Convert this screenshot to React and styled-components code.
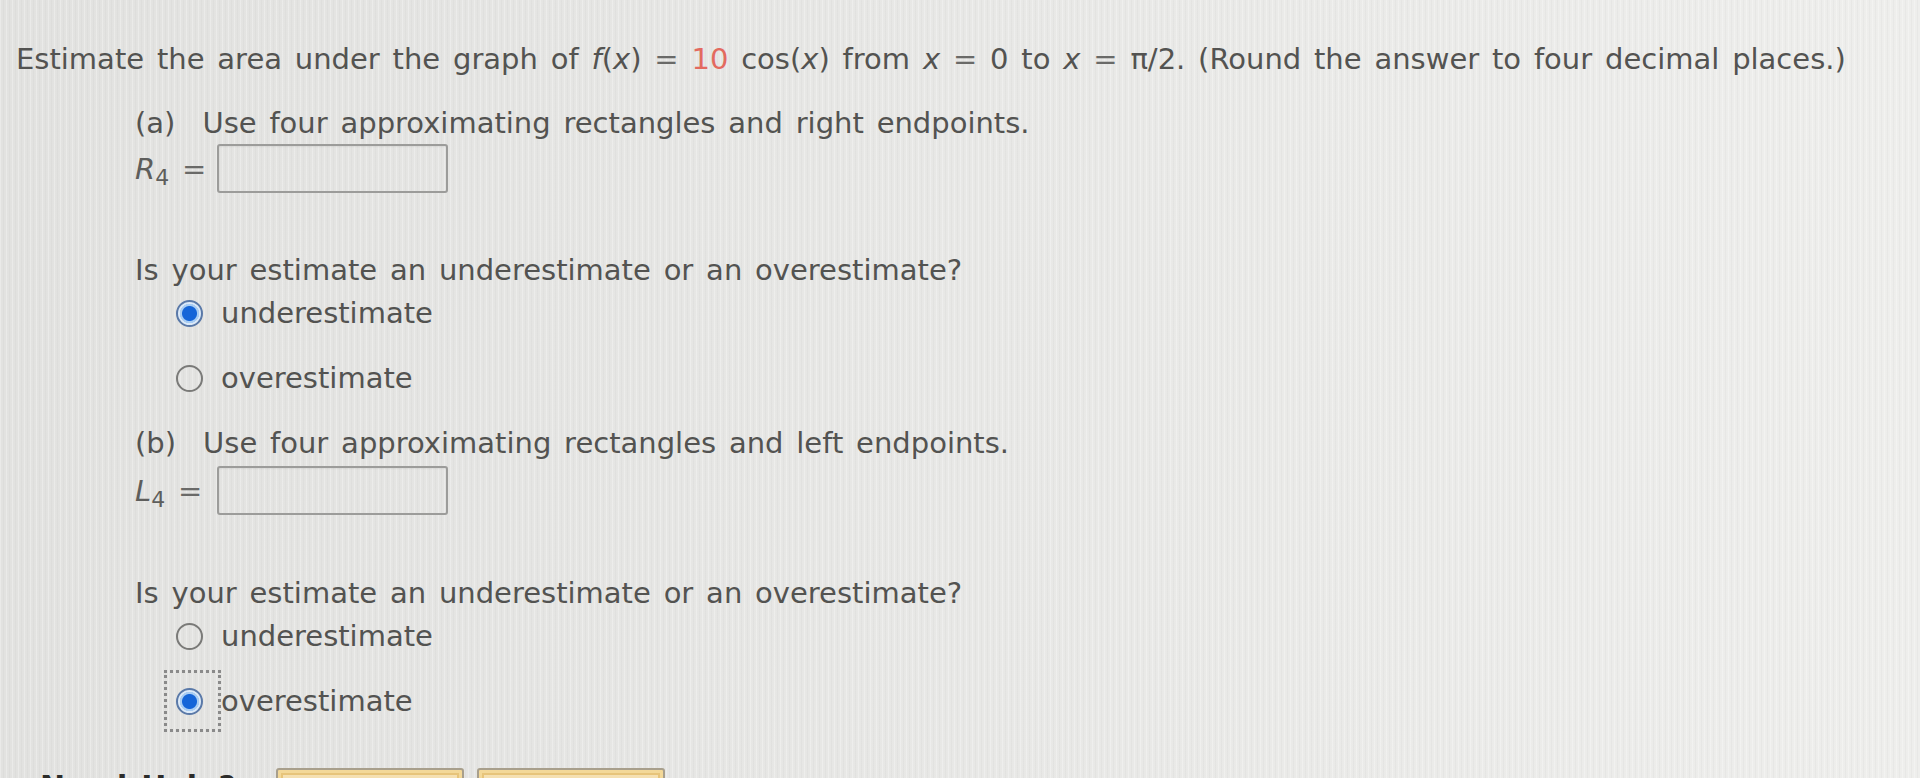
import React from "react";
import styled, { createGlobalStyle } from "styled-components";

const Global = createGlobalStyle`
  html, body {
    margin: 0;
    padding: 0;
    overflow: hidden;
    height: 100%;
  }
  body {
    font-family: "DejaVu Sans", Verdana, "Noto Sans", sans-serif;
  }
`;

const Page = styled.div`
  width: 1920px;
  height: 778px;
  box-sizing: border-box;
  padding: 42px 0 0 16px;
  color: #535351;
  font-size: 29px;
  line-height: 34px;
  word-spacing: 3.6px;
  background-color: #e7e7e5;
  background-image:
    repeating-linear-gradient(90deg, rgba(255, 255, 255, 0.28) 0 1px, rgba(0, 0, 0, 0) 1px 3px, rgba(160, 160, 160, 0.08) 3px 4px, rgba(0, 0, 0, 0) 4px 6px),
    linear-gradient(90deg, #e2e2e0 0%, #e6e6e4 35%, #ebebe9 75%, #eeeeec 100%);
  overflow: hidden;
`;

const Question = styled.p`
  margin: 0;
  white-space: nowrap;
`;

const Var = styled.i`
  font-style: italic;
`;

const Highlight = styled.span`
  color: #e36a5f;
`;

const Eq = styled.span`
  color: #6a6a68;
`;

const Part = styled.div`
  display: flex;
  flex-direction: column;
  padding-left: 119px;
`;

const PartTitle = styled.p`
  margin: ${(p) => p.$top}px 0 0 0;
  white-space: nowrap;
`;

const PartTag = styled.span`
  margin-right: 27px;
`;

const AnswerRow = styled.div`
  display: flex;
  align-items: center;
  margin-top: ${(p) => p.$top}px;
  height: 49px;
`;

const AnswerLabel = styled.span`
  width: 82px;
  color: #5e5e5c;
  white-space: nowrap;
`;

const Sub = styled.sub`
  font-size: 22px;
  font-style: normal;
  vertical-align: -6px;
  line-height: 0;
`;

const AnswerBox = styled.div`
  width: 231px;
  height: 49px;
  box-sizing: border-box;
  border: 2px solid #9c9c9a;
  border-radius: 3px;
  box-shadow: inset 0 1px 2px rgba(0, 0, 0, 0.06);
`;

const Prompt = styled.p`
  margin: ${(p) => p.$top}px 0 0 0;
  white-space: nowrap;
`;

const Options = styled.div`
  display: flex;
  flex-direction: column;
  gap: 13px;
  padding-left: 39px;
`;

const Option = styled.label`
  display: flex;
  align-items: center;
  height: 52px;
`;

const RadioWrap = styled.span`
  display: flex;
  align-items: center;
  justify-content: flex-start;
  flex-shrink: 0;
  width: 57px;
  height: 62px;
  padding-left: 9px;
  margin-left: -10px;
  box-sizing: border-box;
  border: 3px dotted ${(p) => (p.$focus ? "#8a8a8a" : "transparent")};
`;

const Radio = styled.span`
  width: 27px;
  height: 27px;
  box-sizing: border-box;
  border-radius: 50%;
  border: 2px solid ${(p) => (p.$checked ? "#5a79a8" : "#7a7a78")};
  background: ${(p) =>
    p.$checked
      ? "radial-gradient(circle, #1565d8 0 7px, #a9cdf3 8px 9.5px, #dbe9f8 10px)"
      : "transparent"};
`;

const OptionText = styled.span`
  white-space: nowrap;
`;

const HelpRow = styled.div`
  display: flex;
  align-items: flex-start;
  margin: 41px 0 0 24px;
  gap: 13px;
`;

const HelpText = styled.span`
  font-weight: bold;
  color: #2c2c2a;
  font-size: 30px;
  margin-top: 2px;
  width: 223px;
  white-space: nowrap;
`;

const HelpButton = styled.span`
  display: block;
  width: 188px;
  height: 48px;
  box-sizing: border-box;
  border: 2px solid #a89f8c;
  border-radius: 3px;
  background: linear-gradient(#f6e3b8, #f0cf8c);
  box-shadow: inset 0 0 0 3px #f3d898, inset 0 0 0 5px #e7c47a;
  color: #3a3a38;
  font-size: 24px;
  text-align: center;
  line-height: 44px;
`;

function RadioOption({ label, checked, focus }) {
  return (
    <Option>
      <RadioWrap $focus={focus}>
        <Radio $checked={checked} />
      </RadioWrap>
      <OptionText>{label}</OptionText>
    </Option>
  );
}

export default function App() {
  return (
    <>
      <Global />
      <Page>
        <Question>
          Estimate the area under the graph of <Var>f</Var>(<Var>x</Var>) <Eq>=</Eq>{" "}
          <Highlight>10</Highlight> cos(<Var>x</Var>) from <Var>x</Var> <Eq>=</Eq> 0 to{" "}
          <Var>x</Var> <Eq>=</Eq> π/2. (Round the answer to four decimal places.)
        </Question>
        <Part>
          <PartTitle $top={30}>
            <PartTag>(a)</PartTag>Use four approximating rectangles and right endpoints.
          </PartTitle>
          <AnswerRow $top={4}>
            <AnswerLabel>
              <Var>R</Var>
              <Sub>4</Sub> <Eq>=</Eq>
            </AnswerLabel>
            <AnswerBox />
          </AnswerRow>
          <Prompt $top={60}>Is your estimate an underestimate or an overestimate?</Prompt>
          <Options>
            <RadioOption label="underestimate" checked />
            <RadioOption label="overestimate" />
          </Options>
          <PartTitle $top={22}>
            <PartTag>(b)</PartTag>Use four approximating rectangles and left endpoints.
          </PartTitle>
          <AnswerRow $top={6}>
            <AnswerLabel>
              <Var>L</Var>
              <Sub>4</Sub> <Eq>=</Eq>
            </AnswerLabel>
            <AnswerBox />
          </AnswerRow>
          <Prompt $top={61}>Is your estimate an underestimate or an overestimate?</Prompt>
          <Options>
            <RadioOption label="underestimate" />
            <RadioOption label="overestimate" checked focus />
          </Options>
        </Part>
        <HelpRow>
          <HelpText>Need Help?</HelpText>
          <HelpButton>Read It</HelpButton>
          <HelpButton>Watch It</HelpButton>
        </HelpRow>
      </Page>
    </>
  );
}
